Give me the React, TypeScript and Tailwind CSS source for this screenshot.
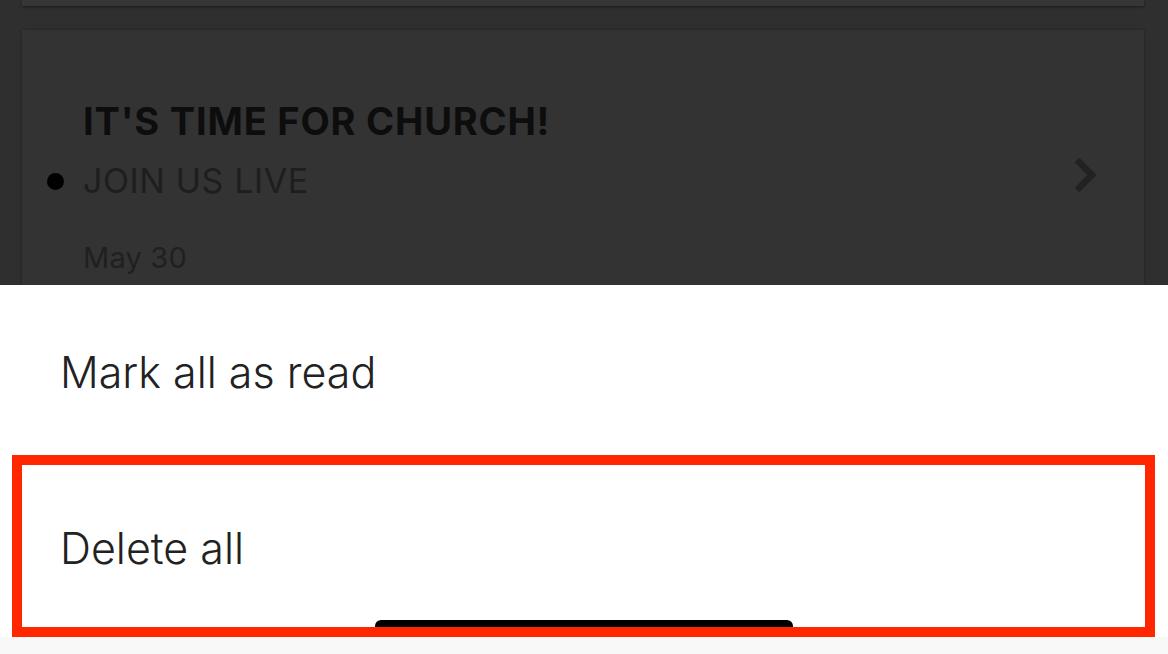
import React from "react";

const font = { fontFamily: "Inter, 'Noto Sans', sans-serif" };

function Chevron() {
  return (
    <svg width="32" height="50" viewBox="0 0 32 50" className="mt-[120px] mr-[44px] shrink-0">
      <path d="M9 10 L24 25 L9 40" fill="none" stroke="#222222" strokeWidth="6.5" strokeLinejoin="miter" />
    </svg>
  );
}

function NotificationCard() {
  return (
    <div className="ml-[22px] mr-[24px] mt-[24px] h-[300px] bg-[#333333] shadow-[0_0_3px_rgba(0,0,0,0.35)] flex justify-between">
      <div className="pl-[61px] pt-[72px] flex flex-col">
        <div className="text-[38px] leading-none font-bold text-[#0d0d0d] tracking-[0.8px]">
          IT'S TIME FOR CHURCH!
        </div>
        <div className="mt-[24px] -ml-[36px] flex items-center gap-[19px]">
          <span className="w-[17px] h-[17px] rounded-full bg-black shrink-0" />
          <span className="text-[34px] leading-none text-[#1e1e1e] tracking-[0.6px]">JOIN US LIVE</span>
        </div>
        <div className="mt-[45px] text-[29px] leading-none text-[#202020] tracking-[0.2px]">May 30</div>
      </div>
      <Chevron />
    </div>
  );
}

export default function App() {
  return (
    <div className="w-[1168px] h-[654px] overflow-hidden flex flex-col bg-white" style={font}>
      {/* dimmed list behind the sheet */}
      <div className="h-[285px] shrink-0 overflow-hidden bg-[#2f2f2f]">
        <div className="ml-[22px] mr-[24px] h-[6px] bg-[#363636] shadow-[0_1px_3px_rgba(0,0,0,0.45)]" />
        <NotificationCard />
      </div>

      {/* action sheet */}
      <div className="flex-1 flex flex-col bg-white">
        <div className="h-[170px] shrink-0 pl-[60px] pt-[66px]">
          <div className="text-[43px] leading-none font-light text-[#222222]">Mark all as read</div>
        </div>
        <div className="relative ml-[12px] mr-[13px] h-[182px] shrink-0 border-[10px] border-[#ff2600] overflow-hidden">
          <div className="pl-[38px] pt-[62px] text-[43px] leading-none font-light text-[#222222]">Delete all</div>
          <div className="absolute left-[353px] bottom-[-6px] w-[418px] h-[13px] rounded-t-[6px] bg-black" />
        </div>
        <div className="flex-1 bg-[#f8f8f8]" />
      </div>
    </div>
  );
}
